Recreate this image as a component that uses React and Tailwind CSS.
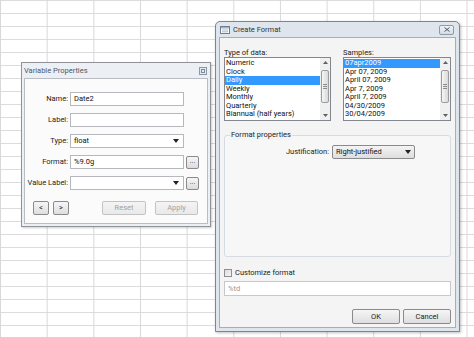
import React from "react";

const typeItems = ["Numeric", "Clock", "Daily", "Weekly", "Monthly", "Quarterly", "Biannual (half years)"];
const sampleItems = ["07apr2009", "Apr 07, 2009", "April 07, 2009", "Apr 7, 2009", "April 7, 2009", "04/30/2009", "30/04/2009"];

function DownArrow() {
  return (
    <svg width="6" height="4" viewBox="0 0 6 4">
      <path d="M0 0h6L3 4z" fill="#222" />
    </svg>
  );
}

function ScrollBar() {
  return (
    <div className="flex w-[10px] flex-col bg-[#f0f0f0]">
      <div className="flex h-[9px] items-center justify-center">
        <svg width="5" height="3" viewBox="0 0 5 3">
          <path d="M0 3h5L2.5 0z" fill="#606060" />
        </svg>
      </div>
      <div className="mx-[1px] mt-[3px] flex h-[33px] flex-col items-center justify-center gap-[1px] rounded-[2px] border border-[#9c9c9c] bg-gradient-to-r from-[#f6f6f6] to-[#d9d9d9]">
        <div className="h-px w-[4px] bg-[#8a8a8a]" />
        <div className="h-px w-[4px] bg-[#8a8a8a]" />
        <div className="h-px w-[4px] bg-[#8a8a8a]" />
      </div>
      <div className="flex-1" />
      <div className="flex h-[9px] items-center justify-center">
        <svg width="5" height="3" viewBox="0 0 5 3">
          <path d="M0 0h5L2.5 3z" fill="#606060" />
        </svg>
      </div>
    </div>
  );
}

function ListBox({ items, selected }) {
  return (
    <div className="flex h-[64px] border border-[#828790] bg-white">
      <div className="flex-1 overflow-hidden pt-[1px]">
        {items.map((it, i) => (
          <div
            key={it}
            className={`h-[8.5px] pl-[1px] text-[7.5px] leading-[8.5px] whitespace-nowrap ${
              i === selected ? "bg-[#3399ff] text-white" : "text-[#111]"
            }`}
          >
            {it}
          </div>
        ))}
      </div>
      <ScrollBar />
    </div>
  );
}

function Btn({ children, className = "", disabled = false }) {
  return (
    <div
      className={`flex h-[14px] items-center justify-center rounded-[2px] border bg-gradient-to-b text-[7.5px] ${
        disabled
          ? "border-[#c3c3c3] from-[#f4f4f4] to-[#e9e9e9] text-[#a3a3a3]"
          : "border-[#8a8a8a] from-[#f6f6f6] to-[#dedede] text-[#222]"
      } ${className}`}
    >
      {children}
    </div>
  );
}

function Dots() {
  return (
    <div className="flex h-[13px] w-[13px] items-end justify-center rounded-[2px] border border-[#8a8a8a] bg-gradient-to-b from-[#f6f6f6] to-[#dcdcdc] pb-[3px] text-[7px] leading-none text-[#333]">
      ...
    </div>
  );
}

function Field({ label, children, dots = false }) {
  return (
    <div className="flex h-[14px] items-center">
      <div className="w-[44px] pr-[1px] text-right text-[7.5px] text-[#222]">{label}</div>
      <div className="ml-[1px] flex h-[14px] w-[114px] items-center border border-[#b5b9be] bg-white px-[3px] text-[7.5px] text-[#111]">
        {children}
      </div>
      {dots && (
        <div className="ml-[2px]">
          <Dots />
        </div>
      )}
    </div>
  );
}

export default function App() {
  return (
    <div className="relative h-[337px] w-[474px] overflow-hidden bg-white font-[family-name:Roboto,'Liberation_Sans',sans-serif]">
      {/* spreadsheet grid */}
      <div className="absolute inset-0 bg-[linear-gradient(to_right,#d9d9d9_1px,transparent_1px),linear-gradient(to_bottom,#dcdcdc_1px,transparent_1px)] bg-size-[46.67px_13px]" />

      {/* Variable Properties window */}
      <div className="absolute left-[21px] top-[62px] flex h-[165px] w-[190px] flex-col border border-[#8f9296] bg-[#eceff3] shadow-[1px_1px_2px_rgba(0,0,0,0.2)]">
        <div className="flex h-[15px] items-center justify-between pl-[2px] pr-[3px]">
          <span className="text-[7.5px] text-[#4c5866]">Variable Properties</span>
          <div className="flex h-[8px] w-[8px] items-center justify-center border border-[#8c98a6] bg-[#e4e9ef]">
            <div className="h-[4px] w-[4px] border border-[#7f8b98]" />
          </div>
        </div>
        <div className="mx-[2px] mb-[2px] flex flex-1 flex-col border border-[#b9bdc3] bg-[#fbfbfb] pt-[13px]">
          <div className="flex flex-col gap-[7px]">
            <Field label="Name:">Date2</Field>
            <Field label="Label:" />
            <Field label="Type:">
              <span className="flex-1">float</span>
              <span className="mr-[1px]">
                <DownArrow />
              </span>
            </Field>
            <Field label="Format:" dots>
              %9.0g
            </Field>
            <Field label="Value Label:" dots>
              <span className="flex-1" />
              <span className="mr-[1px]">
                <DownArrow />
              </span>
            </Field>
          </div>
          <div className="mt-[11px] flex items-center pl-[8px] pr-[9px]">
            <Btn className="w-[16px]">&lt;</Btn>
            <Btn className="ml-[4px] w-[16px]">&gt;</Btn>
            <Btn disabled className="ml-auto w-[44px]">
              Reset
            </Btn>
            <Btn disabled className="ml-[9px] w-[43px]">
              Apply
            </Btn>
          </div>
        </div>
      </div>

      {/* Create Format window */}
      <div className="absolute left-[215px] top-[21px] flex h-[311px] w-[245px] flex-col rounded-t-[5px] border border-[#7c8590] bg-[#dfe5ec] shadow-[1px_1px_3px_rgba(0,0,0,0.25)]">
        <div className="flex h-[15px] items-center pl-[4px] pr-[5px]">
          <svg width="10" height="8" viewBox="0 0 10 8">
            <rect x="0.5" y="0.5" width="9" height="7" fill="#fff" stroke="#6f7f92" />
            <rect x="1" y="1" width="8" height="1.5" fill="#9db3cc" />
            <path d="M2 4h6M2 5.8h6" stroke="#9aa7b5" strokeWidth="0.8" />
          </svg>
          <span className="ml-[3px] flex-1 text-[7.5px] text-[#2b3440]">Create Format</span>
          <div className="flex h-[10px] w-[15px] items-center justify-center rounded-[2px] border border-[#8e99a6] bg-gradient-to-b from-[#eef2f6] to-[#d4dce5]">
            <svg width="6" height="5" viewBox="0 0 6 5">
              <path d="M0.5 0.5l5 4M5.5 0.5l-5 4" stroke="#4b5563" strokeWidth="1" />
            </svg>
          </div>
        </div>
        <div className="mx-[3px] mb-[3px] flex flex-1 flex-col border border-[#a7aeb6] bg-[#f4f4f4] px-[4px] pt-[10px]">
          <div className="flex gap-[12px]">
            <div className="w-[107px]">
              <div className="h-[9px] text-[7.5px] leading-[9px] text-[#222]">Type of data:</div>
              <ListBox items={typeItems} selected={2} />
            </div>
            <div className="w-[108px]">
              <div className="h-[9px] text-[7.5px] leading-[9px] text-[#222]">Samples:</div>
              <ListBox items={sampleItems} selected={0} />
            </div>
          </div>

          <div className="relative mt-[14px] h-[122px] rounded-[3px] border border-[#d5dbe1] bg-[#f7f7f7]">
            <span className="absolute -top-[6px] left-[5px] bg-[#f4f4f4] px-[1px] text-[7.5px] leading-[10px] text-[#222]">
              Format properties
            </span>
            <div className="mt-[9px] flex items-center">
              <span className="w-[104px] text-right text-[7.5px] text-[#222]">Justification:</span>
              <div className="ml-[3px] flex h-[14px] w-[83px] items-center rounded-[2px] border border-[#8a8a8a] bg-gradient-to-b from-[#f4f4f4] to-[#dedede] px-[3px] text-[7.5px] text-[#111]">
                <span className="flex-1">Right-justified</span>
                <DownArrow />
              </div>
            </div>
          </div>

          <div className="mt-[10px] flex items-center">
            <div className="h-[8px] w-[8px] border border-[#8e8f8f] bg-gradient-to-br from-[#dcdcdc] to-[#f6f6f6]" />
            <span className="ml-[3px] text-[7.5px] text-[#222]">Customize format</span>
          </div>
          <div className="mt-[3px] flex h-[15px] items-center border border-[#c5c9ce] bg-white px-[3px] text-[7.5px] text-[#9a9a9a]">
            %td
          </div>

          <div className="mt-[13px] flex justify-end gap-[3px]">
            <Btn className="h-[15px] w-[48px]">OK</Btn>
            <Btn className="h-[15px] w-[48px]">Cancel</Btn>
          </div>
        </div>
      </div>
    </div>
  );
}
